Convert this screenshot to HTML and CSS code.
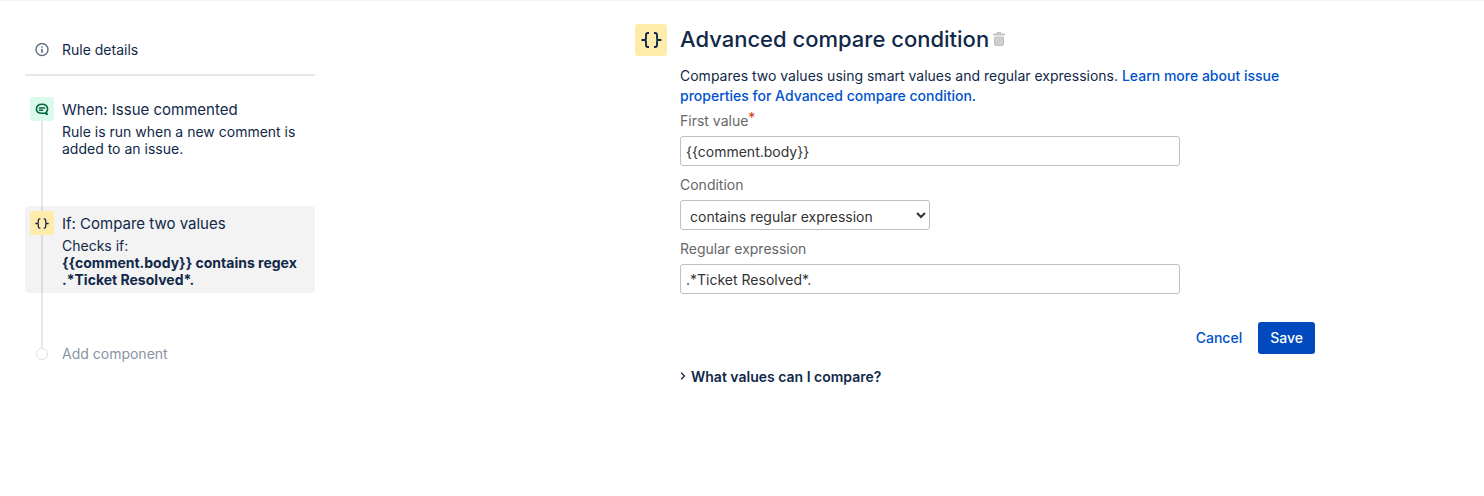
FILE: index.html
```html
<!DOCTYPE html>
<html lang="en">
<head>
<meta charset="utf-8">
<title>Automation rule</title>
<link rel="stylesheet" href="styles.css">
</head>
<body>
<div class="layout">
  <nav class="rule" aria-label="Rule">
    <a class="details" href="#details">
      <svg class="info-icon" viewBox="0 0 14 14" aria-hidden="true"><circle cx="7" cy="6.500" r="6" fill="none" stroke="currentColor" stroke-width="1.4"/><rect x="6.2" y="3.200" width="1.6" height="1.6" rx=".6"/><rect x="6.2" y="5.700" width="1.6" height="4.2" rx=".6"/></svg>
      <span>Rule details</span>
    </a>
    <ol class="steps">
      <li class="step">
        <span class="badge badge-green">
          <svg class="badge-icon" viewBox="0 0 14 14" fill="none" stroke="currentColor" stroke-linecap="round" stroke-linejoin="round" aria-hidden="true"><path stroke-width="1.6" d="M11.2 10.3C12.2 9.5 12.6 8.4 12.6 7 12.6 4 10.5 2.3 7 2.3S1.4 4 1.4 7 3.5 11.3 7 11.3H10L12.2 12.2L11.200 10.300"/><path stroke-width="1.4" d="M4.400 6H9.600M4.400 8.200H7.600"/></svg>
        </span>
        <div class="step-text">
          <h2 class="step-title">When: Issue commented</h2>
          <p class="step-desc">Rule is run when a new comment is added to an issue.</p>
        </div>
      </li>
      <li class="step step-selected">
        <span class="badge badge-yellow">
          <svg class="brace-icon" viewBox="0 0 21 16" fill="none" stroke="currentColor" stroke-width="1.9" aria-hidden="true"><path d="M8 1H7Q5 1 5 3V6Q5 8 3.500 8H.5H3.500Q5 8 5 10V13Q5 15 7 15H8M13 1H14Q16 1 16 3V6Q16 8 17.500 8H20.500H17.500Q16 8 16 10V13Q16 15 14 15H13"/></svg>
        </span>
        <div class="step-text">
          <h2 class="step-title">If: Compare two values</h2>
          <p class="step-desc">Checks if:<br><strong>{{comment.body}} contains regex .*Ticket Resolved*.</strong></p>
        </div>
      </li>
    </ol>
    <button class="add" type="button"><span class="add-dot"></span><span>Add component</span></button>
  </nav>

  <main class="panel">
    <span class="badge badge-yellow badge-large">
      <svg class="brace-icon" viewBox="0 0 21 16" fill="none" stroke="currentColor" stroke-width="1.9" aria-hidden="true"><path d="M8 1H7Q5 1 5 3V6Q5 8 3.500 8H.5H3.500Q5 8 5 10V13Q5 15 7 15H8M13 1H14Q16 1 16 3V6Q16 8 17.500 8H20.500H17.500Q16 8 16 10V13Q16 15 14 15H13"/></svg>
    </span>
    <div class="content">
      <header class="heading">
        <h1 class="title">Advanced compare condition</h1>
        <button class="delete" type="button" aria-label="Delete">
          <svg viewBox="0 0 12 14" aria-hidden="true"><path fill="#c4c4c4" d="M.5 1.500H3.500V1Q3.500 0 4.500 0H7.500Q8.500 0 8.500 1V1.500H11.500Q12 1.500 12 2V3.500H0V2Q0 1.500 .5 1.500Z"/><path fill="#cfcfcf" stroke="#bfbfbf" d="M1.500 5H10.500V12Q10.500 13.500 9 13.500H3Q1.500 13.500 1.500 12Z"/></svg>
        </button>
      </header>
      <p class="intro">Compares two values using smart values and regular expressions. <a href="#learn">Learn more about issue properties for Advanced compare condition.</a></p>
      <form class="form">
        <div class="field">
          <label for="first">First value<sup class="required">*</sup></label>
          <input id="first" type="text" value="{{comment.body}}">
        </div>
        <div class="field">
          <label for="condition">Condition</label>
          <select id="condition"><option>contains regular expression</option></select>
        </div>
        <div class="field">
          <label for="regex">Regular expression</label>
          <input id="regex" type="text" value=".*Ticket Resolved*.">
        </div>
        <div class="actions">
          <button class="btn" type="button">Cancel</button>
          <button class="btn btn-primary" type="submit">Save</button>
        </div>
      </form>
      <button class="help" type="button" aria-expanded="false">
        <svg viewBox="0 0 6 10" fill="none" stroke="currentColor" stroke-width="1.3" aria-hidden="true"><path d="M1.200 .8L4.500 4L1.200 7.200"/></svg>
        <span>What values can I compare?</span>
      </button>
    </div>
  </main>
</div>
</body>
</html>
```
FILE: styles.css
```css
* {
  box-sizing: border-box;
}

body {
  margin: 0;
  border-top: 1px solid #f4f4f5;
  background: #fff;
  color: #112849;
  font: 14px/20px Inter, "Liberation Sans", sans-serif;
}

h1, h2, p, ol {
  margin: 0;
  padding: 0;
}

button {
  border: 0;
  padding: 0;
  background: none;
  color: inherit;
  font: inherit;
  cursor: pointer;
}

a {
  color: #0052cc;
  font-weight: 500;
  text-decoration: none;
}

.layout {
  display: flex;
  justify-content: space-between;
  gap: 40px;
  padding: 23px 169px 40px 25px;
}

.rule {
  flex: 0 0 290px;
  padding-top: 16px;
}

.details {
  display: flex;
  align-items: center;
  gap: 13px;
  padding: 0 10px 14px;
  border-bottom: 2px solid #e6e6ed;
  color: inherit;
  font-weight: 400;
}

.info-icon {
  width: 14px;
  height: 14px;
  color: #5e6c84;
  fill: currentColor;
}

.steps {
  position: relative;
  display: grid;
  gap: 44px;
  margin-top: 16px;
  padding-bottom: 51px;
  list-style: none;
}

.steps::before {
  content: "";
  position: absolute;
  top: 5px;
  bottom: -4px;
  left: 16px;
  width: 2px;
  background: rgba(9, 9, 63, 0.1);
}

.step {
  display: flex;
  gap: 8px;
  padding: 5px;
  border-radius: 4px;
}

.step-selected {
  background: #f3f3f3;
}

.step-text {
  padding-top: 2px;
}

.step-title {
  font-size: 15px;
  font-weight: 400;
  line-height: 22px;
}

.step-desc {
  padding-top: 2px;
  line-height: 17px;
}

.badge {
  position: relative;
  display: flex;
  flex: none;
  align-items: center;
  justify-content: center;
  width: 24px;
  height: 24px;
  border-radius: 3px;
}

.badge-green {
  background: #dcfaeb;
  color: #006644;
}

.badge-yellow {
  background: #ffebac;
}

.badge-icon {
  width: 14px;
  height: 14px;
}

.brace-icon {
  width: 14px;
  height: 11px;
}

.badge-large {
  width: 32px;
  height: 32px;
}

.badge-large .brace-icon {
  width: 21px;
  height: 16px;
}

.add {
  display: flex;
  align-items: center;
  gap: 14px;
  padding: 0 11px;
  color: #8993a4;
}

.add-dot {
  width: 12px;
  height: 12px;
  border: 1px solid #dfe1e6;
  border-radius: 50%;
}

.panel {
  display: flex;
  flex: 0 1 680px;
  gap: 13px;
}

.content {
  flex: 1;
}

.heading {
  display: flex;
  align-items: center;
  gap: 4px;
}

.title {
  font-size: 22px;
  font-weight: 500;
  line-height: 30px;
}

.delete {
  display: flex;
  width: 12px;
  height: 14px;
}

.intro {
  max-width: 600px;
  margin-top: 12px;
}

.form {
  margin-top: 5px;
}

.field {
  display: grid;
  gap: 5px;
  margin-bottom: 9px;
}

.field label {
  color: #666;
}

.required {
  color: #de350b;
  font-size: 14px;
  line-height: 0;
  vertical-align: 3px;
}

.field input,
.field select {
  width: 100%;
  max-width: 500px;
  height: 30px;
  border: 1px solid #bfbfbf;
  border-radius: 3px;
  padding: 0 5px;
  background: #fff;
  color: #333;
  font: inherit;
}

.field select {
  max-width: 250px;
  padding: 2px 0 0 5px;
}

.actions {
  display: flex;
  justify-content: flex-end;
  gap: 4px;
  margin-top: 28px;
}

.btn {
  height: 32px;
  padding: 0 12px;
  border-radius: 3px;
  color: #0052cc;
  font-weight: 500;
}

.btn-primary {
  background: #0049bf;
  color: #fff;
}

.help {
  display: flex;
  align-items: center;
  gap: 5px;
  margin-top: 13px;
  font-weight: 600;
}

.help svg {
  width: 6px;
  height: 10px;
}
```
